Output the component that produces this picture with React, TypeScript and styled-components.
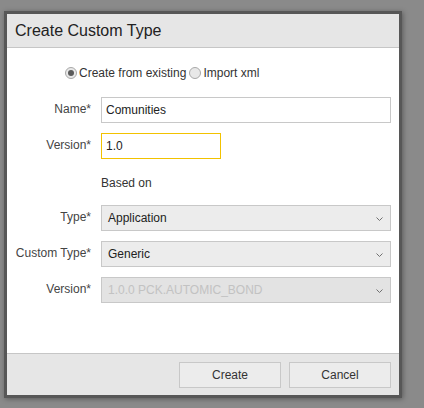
import React from 'react';
import styled, { createGlobalStyle } from 'styled-components';

const GlobalStyle = createGlobalStyle`
html, body {
  margin: 0;
  padding: 0;
  background: #8a8a8a;
  font-family: "Liberation Sans", Arial, sans-serif;
}
`

const Page = styled.div`
width: 424px;
height: 408px;
padding: 11px 0 0 4px;
box-sizing: border-box;
overflow: hidden;
`
const Dialog = styled.div`
width: 398px;
box-sizing: border-box;
border: 3px solid #575757;
background: #ffffff;
box-shadow: 1px 1px 5px rgba(0, 0, 0, 0.35);
display: flex;
flex-direction: column;
`
const Header = styled.div`
height: 33px;
background: #e6e6e6;
border-bottom: 1px solid #c6c6c6;
padding-left: 8px;
display: flex;
align-items: center;
font-size: 16px;
color: #222;
`
const Body = styled.div`
padding: 17px 8px 50px 0;
display: flex;
flex-direction: column;
`
const RadioRow = styled.div`
display: flex;
align-items: center;
height: 16px;
padding-left: 58px;
margin-bottom: 16px;
font-size: 12px;
color: #333;
`
const RadioOption = styled.label<{ spaced?: boolean }>`
display: flex;
align-items: center;
margin-left: ${p => (p.spaced ? '3px' : '0')};
`
const RadioDot = styled.span<{ checked?: boolean }>`
width: 12px;
height: 12px;
box-sizing: border-box;
border-radius: 50%;
border: 1px solid #a8a8a8;
background: #e8e8e8;
margin-right: 2px;
display: flex;
align-items: center;
justify-content: center;
&::after {
  content: '';
  width: 6px;
  height: 6px;
  border-radius: 50%;
  background: ${p => (p.checked ? '#5a5a5a' : 'transparent')};
}
`
const Form = styled.div`
display: grid;
grid-template-columns: 84px 1fr;
column-gap: 10px;
row-gap: 10px;
grid-auto-rows: 26px;
`
const Label = styled.div`
font-size: 12px;
color: #444;
text-align: right;
display: flex;
align-items: center;
justify-content: flex-end;
margin-top: -3px;
`
const Field = styled.div`
display: flex;
align-items: center;
`
const Input = styled.input<{ focused?: boolean; narrow?: boolean }>`
width: ${p => (p.narrow ? '120px' : '100%')};
height: 26px;
box-sizing: border-box;
border: 1px solid ${p => (p.focused ? '#f2c200' : '#c8c8c8')};
outline: none;
padding: 0 4px;
font-family: "Liberation Sans", Arial, sans-serif;
font-size: 12px;
color: #222;
background: #fff;
`
const Note = styled.div`
font-size: 12px;
color: #333;
display: flex;
align-items: center;
margin-top: 1px;
`
const SelectBox = styled.div<{ disabled?: boolean }>`
position: relative;
width: 100%;
height: 26px;
box-sizing: border-box;
border: 1px solid #c8c8c8;
background: ${p => (p.disabled ? '#e3e3e3' : '#ececec')};
color: ${p => (p.disabled ? '#c2c2c2' : '#222')};
font-size: 12px;
display: flex;
align-items: center;
padding-left: 6px;
`
const Chevron = styled.svg`
position: absolute;
right: 7px;
top: 11px;
`
const Footer = styled.div`
background: #e6e6e6;
border-top: 1px solid #c6c6c6;
height: 42px;
box-sizing: border-box;
padding: 8px 8px 0 0;
display: flex;
justify-content: flex-end;
gap: 8px;
`
const Button = styled.button`
width: 102px;
height: 26px;
box-sizing: border-box;
border: 1px solid #c8c8c8;
background: #ececec;
font-family: "Liberation Sans", Arial, sans-serif;
font-size: 12px;
color: #333;
padding: 0;
`

function Select({ value, disabled }: { value: string; disabled?: boolean }) {
  return (
    <SelectBox disabled={disabled}>
      {value}
      <Chevron width="7" height="4" viewBox="0 0 7 4">
        <path d="M0.5 0.5 L3.5 3.5 L6.5 0.5" fill="none" stroke="#707070" strokeWidth="1" />
      </Chevron>
    </SelectBox>
  )
}

export default function App() {
  return (
    <Page>
      <GlobalStyle />
      <Dialog>
        <Header>Create Custom Type</Header>
        <Body>
          <RadioRow>
            <RadioOption><RadioDot checked />Create from existing</RadioOption>
            <RadioOption spaced><RadioDot />Import xml</RadioOption>
          </RadioRow>
          <Form>
            <Label>Name*</Label>
            <Field><Input defaultValue="Comunities" /></Field>
            <Label>Version*</Label>
            <Field><Input narrow focused defaultValue="1.0" /></Field>
            <div />
            <Note>Based on</Note>
            <Label>Type*</Label>
            <Field><Select value="Application" /></Field>
            <Label>Custom Type*</Label>
            <Field><Select value="Generic" /></Field>
            <Label>Version*</Label>
            <Field><Select value="1.0.0 PCK.AUTOMIC_BOND" disabled /></Field>
          </Form>
        </Body>
        <Footer>
          <Button>Create</Button>
          <Button>Cancel</Button>
        </Footer>
      </Dialog>
    </Page>
  )
}
